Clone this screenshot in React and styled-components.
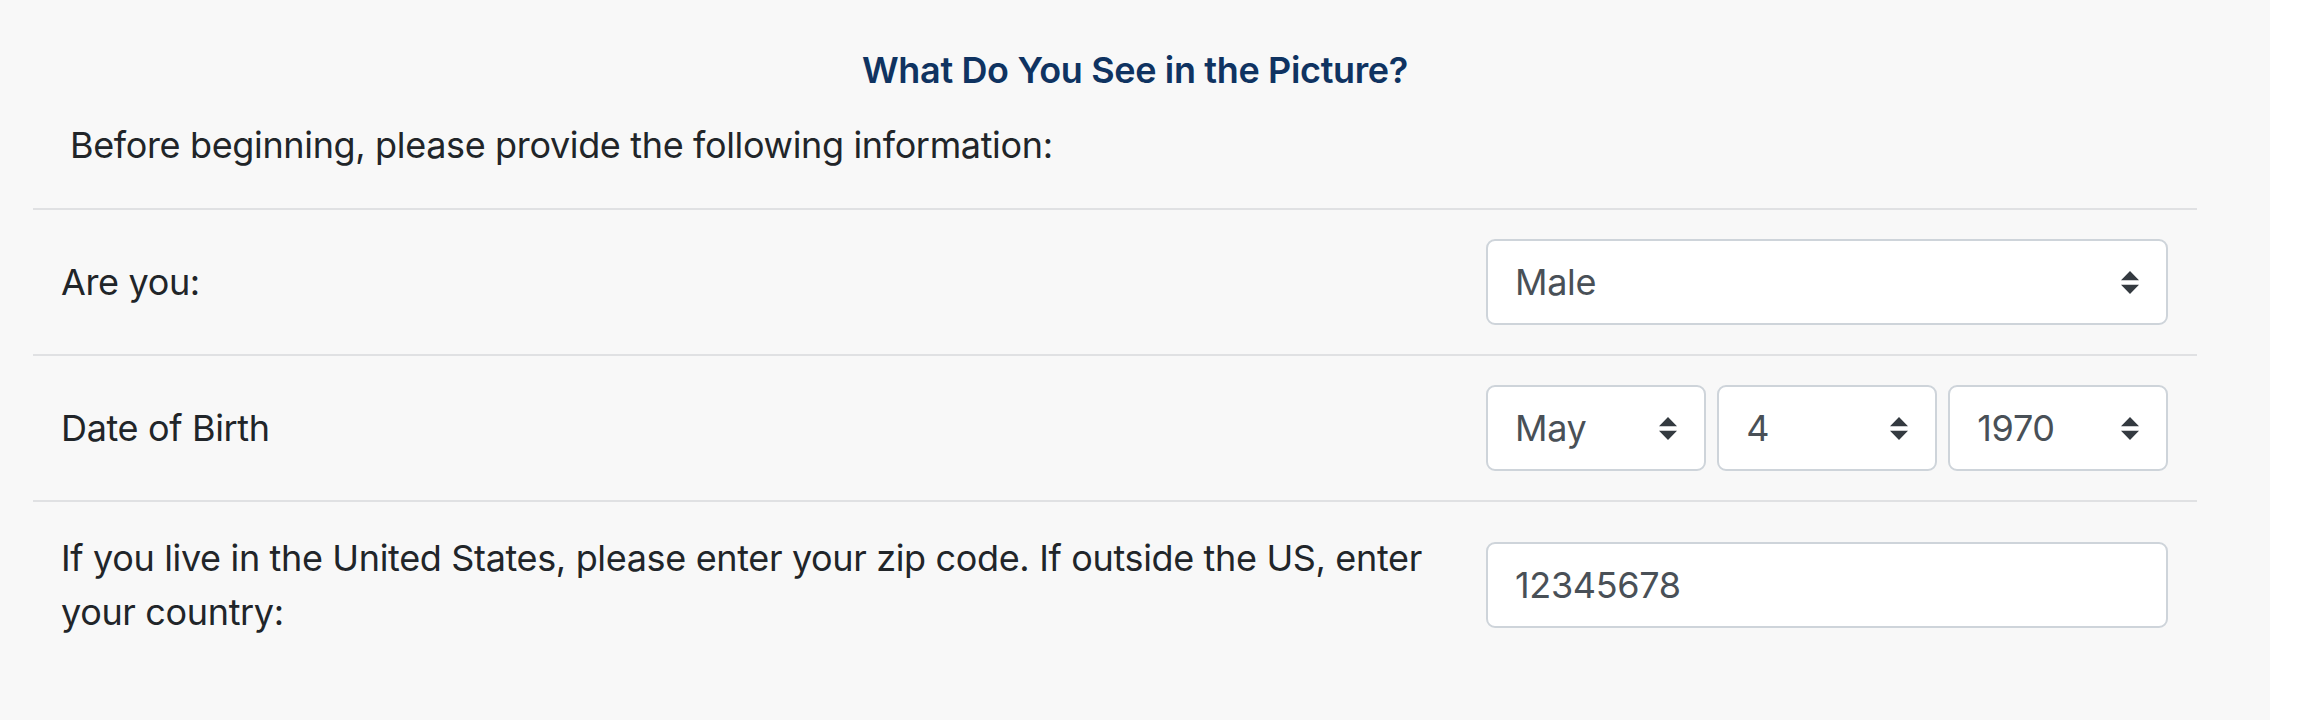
import styled, { createGlobalStyle } from "styled-components";

const GlobalStyle = createGlobalStyle`
  html, body {
    margin: 0;
    padding: 0;
    background: #ffffff;
  }
  body {
    font-family: Inter, "Noto Sans", "Liberation Sans", sans-serif;
    letter-spacing: -0.35px;
    color: #212529;
  }
  * {
    box-sizing: border-box;
  }
`;

const arrow =
  "url(\"data:image/svg+xml;charset=utf8,%3Csvg xmlns='http://www.w3.org/2000/svg' viewBox='0 0 4 5'%3E%3Cpath fill='%23343a40' d='M2 0L0 2h4zm0 5L0 3h4z'/%3E%3C/svg%3E\")";

const Page = styled.div`
  width: 2270px;
  min-height: 720px;
  background: #f8f8f8;
  padding: 43px 73px 0 33px;
`;

const Title = styled.h5`
  margin: 0 -73px 0 -33px;
  text-align: center;
  font-size: 36px;
  line-height: 54px;
  font-weight: 600;
  color: #0f3361;
`;

const Intro = styled.p`
  margin: 21px 0 36px;
  padding-left: 37px;
  font-size: 36px;
  line-height: 54px;
`;

const Divider = styled.hr`
  margin: 0;
  border: 0;
  border-top: 2px solid #e0e1e3;
`;

const Row = styled.div`
  display: flex;
  border-bottom: ${(p) => (p.$last ? "none" : "2px solid #e0e1e3")};
`;

const Label = styled.div`
  width: 1424px;
  padding: 29px 4px 29px 28px;
  display: flex;
  align-items: center;
  font-size: 36px;
  line-height: 54px;
`;

const Control = styled.div`
  flex: 1;
  padding: 29px 29px;
  display: flex;
  align-items: center;
`;

const DateGrid = styled.div`
  flex: 1;
  display: grid;
  grid-template-columns: repeat(3, 1fr);
  gap: 11.5px;
`;

const Select = styled.select`
  width: 100%;
  height: 86px;
  padding: 0 72px 0 27px;
  font-family: inherit;
  font-size: 36px;
  letter-spacing: -0.35px;
  color: #495057;
  background: #ffffff ${arrow} no-repeat right 27px center / 18px 22.5px;
  border: 2px solid #ced4da;
  border-radius: 9px;
  appearance: none;
  -webkit-appearance: none;
  outline: none;
`;

const Input = styled.input`
  width: 100%;
  height: 86px;
  padding: 0 27px;
  font-family: inherit;
  font-size: 36px;
  letter-spacing: -0.35px;
  color: #495057;
  background: #ffffff;
  border: 2px solid #ced4da;
  border-radius: 9px;
  outline: none;
`;

const months = ["January", "February", "March", "April", "May", "June", "July",
  "August", "September", "October", "November", "December"];

export default function App() {
  return (
    <>
      <GlobalStyle />
      <Page>
        <Title>What Do You See in the Picture?</Title>
        <Intro>Before beginning, please provide the following information:</Intro>
        <Divider />
        <Row>
          <Label>Are you:</Label>
          <Control>
            <Select defaultValue="Male">
              <option>Male</option>
              <option>Female</option>
            </Select>
          </Control>
        </Row>
        <Row>
          <Label>Date of Birth</Label>
          <Control>
            <DateGrid>
              <Select defaultValue="May">
                {months.map((m) => (
                  <option key={m} value={m}>{m.length > 4 ? m.slice(0, 3) : m}</option>
                ))}
              </Select>
              <Select defaultValue="4">
                {Array.from({ length: 31 }, (_, i) => (
                  <option key={i}>{i + 1}</option>
                ))}
              </Select>
              <Select defaultValue="1970">
                {Array.from({ length: 60 }, (_, i) => (
                  <option key={i}>{1940 + i}</option>
                ))}
              </Select>
            </DateGrid>
          </Control>
        </Row>
        <Row $last>
          <Label>
            If you live in the United States, please enter your zip code. If outside the US, enter your country:
          </Label>
          <Control>
            <Input defaultValue="12345678" />
          </Control>
        </Row>
      </Page>
    </>
  );
}
